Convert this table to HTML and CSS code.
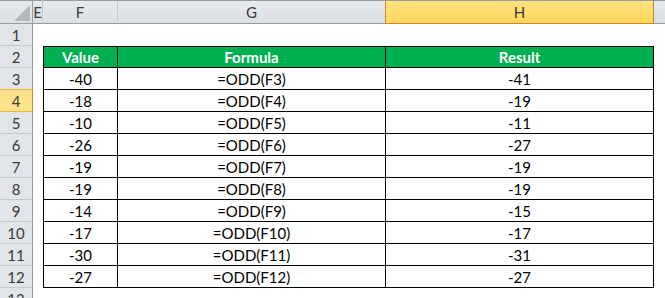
FILE: index.html
```html
<!DOCTYPE html>
<html>
<head>
<meta charset="utf-8">
<link rel="stylesheet" href="styles.css">
</head>
<body>
<div class="sheet">
  <div class="ch corner"><span class="tri"></span></div>
  <div class="ch">E</div>
  <div class="ch">F</div>
  <div class="ch">G</div>
  <div class="ch sel">H</div>
  <div class="ch last"></div>

  <div class="rh">1</div><div class="c"></div><div class="c"></div><div class="c"></div><div class="c"></div><div class="c"></div>

  <div class="rh">2</div><div class="c"></div>
  <div class="t th first top">Value</div><div class="t th top">Formula</div><div class="t th top">Result</div><div class="c"></div>

  <div class="rh">3</div><div class="c"></div><div class="t first">-40</div><div class="t">=ODD(F3)</div><div class="t">-41</div><div class="c"></div>
  <div class="rh rsel">4</div><div class="c"></div><div class="t first">-18</div><div class="t">=ODD(F4)</div><div class="t">-19</div><div class="c"></div>
  <div class="rh">5</div><div class="c"></div><div class="t first">-10</div><div class="t">=ODD(F5)</div><div class="t">-11</div><div class="c"></div>
  <div class="rh">6</div><div class="c"></div><div class="t first">-26</div><div class="t">=ODD(F6)</div><div class="t">-27</div><div class="c"></div>
  <div class="rh">7</div><div class="c"></div><div class="t first">-19</div><div class="t">=ODD(F7)</div><div class="t">-19</div><div class="c"></div>
  <div class="rh">8</div><div class="c"></div><div class="t first">-19</div><div class="t">=ODD(F8)</div><div class="t">-19</div><div class="c"></div>
  <div class="rh">9</div><div class="c"></div><div class="t first">-14</div><div class="t">=ODD(F9)</div><div class="t">-15</div><div class="c"></div>
  <div class="rh">10</div><div class="c"></div><div class="t first">-17</div><div class="t">=ODD(F10)</div><div class="t">-17</div><div class="c"></div>
  <div class="rh">11</div><div class="c"></div><div class="t first">-30</div><div class="t">=ODD(F11)</div><div class="t">-31</div><div class="c"></div>
  <div class="rh">12</div><div class="c"></div><div class="t first">-27</div><div class="t">=ODD(F12)</div><div class="t">-27</div><div class="c"></div>
  <div class="rh">13</div><div class="c"></div><div class="c"></div><div class="c"></div><div class="c"></div><div class="c"></div>
</div>
</body>
</html>
```
FILE: styles.css
```css
* { box-sizing: border-box; }
html, body { margin: 0; padding: 0; background: #fff; }
body { width: 665px; height: 298px; overflow: hidden; font-family: Lato, "Liberation Sans", sans-serif; font-size: 15px; color: #000; }

.sheet {
  display: grid;
  grid-template-columns: 33px 10px 75px 268px 268px 11px;
  grid-template-rows: 24px repeat(13, 22px);
}

.ch {
  background: linear-gradient(#e6e9ed, #dcdfe4);
  border-top: 1px solid #9b9b9b;
  border-bottom: 1px solid #9b9b9b;
  border-right: 1px solid #c5c9cf;
  color: #3b3b3b;
  display: flex; align-items: center; justify-content: center;
  overflow: hidden;
  font-size: 15px;
}
.ch.last { border-right: none; }
.ch.corner { position: relative; border-right: 1px solid #9b9b9b; }
.tri {
  position: absolute; right: 2px; bottom: 2px;
  width: 0; height: 0;
  border-left: 16px solid transparent;
  border-bottom: 16px solid #b4b7bb;
}
.ch.sel {
  background: linear-gradient(#ffe37f, #ffd65b);
  border-bottom: 1px solid #c28a2e;
  border-right: 1px solid #c28a2e;
  border-left: 1px solid #c28a2e;
  margin-left: -1px;
}

.rh {
  background: #e1e4e8;
  border-right: 1px solid #9b9b9b;
  border-bottom: 1px solid #c5c9cf;
  color: #3b3b3b;
  display: flex; align-items: center; justify-content: center;
}
.rh.rsel {
  background: #ffe28c;
  border-top: 1px solid #f0b840;
  border-bottom: 1px solid #f0b840;
  border-right: 1px solid #c28a2e;
  margin-top: -1px;
}

.c { background: #fff; }

.t {
  border-right: 1px solid #000;
  border-bottom: 1px solid #000;
  display: flex; align-items: center; justify-content: center;
  white-space: nowrap;
}
.t.first { border-left: 1px solid #000; }
.t.top { border-top: 1px solid #000; }
.t.th { background: #00b050; color: #fff; font-weight: bold; }
```
